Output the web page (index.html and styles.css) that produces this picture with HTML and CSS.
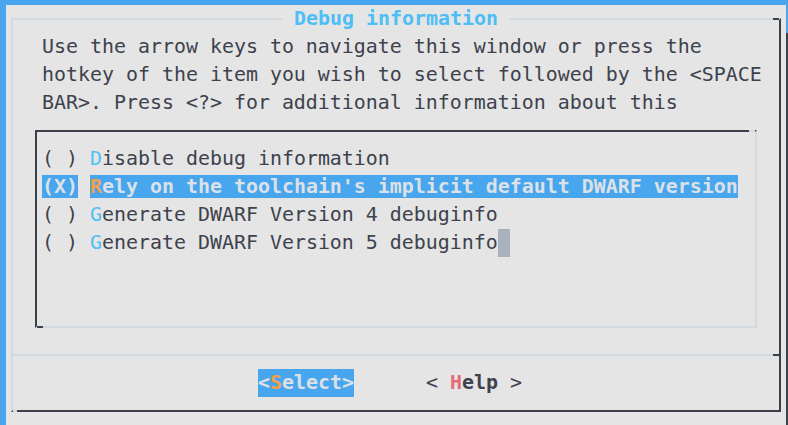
FILE: index.html
```html
<!DOCTYPE html>
<html>
<head>
<meta charset="utf-8">
<link rel="stylesheet" href="styles.css">
</head>
<body>
<div class="screen">
  <div class="dialog">
    <div class="frame">
      <div class="title-row"><span class="title"> Debug information </span></div>
      <div class="prompt">
        <div class="line">Use the arrow keys to navigate this window or press the</div>
        <div class="line">hotkey of the item you wish to select followed by the &lt;SPACE</div>
        <div class="line">BAR&gt;. Press &lt;?&gt; for additional information about this</div>
      </div>
      <div class="listbox">
        <div class="item"><span class="mark">( )</span> <span class="label"><span class="hk">D</span>isable debug information</span></div>
        <div class="item sel"><span class="mark">(X)</span> <span class="label"><span class="hk">R</span>ely on the toolchain's implicit default DWARF version</span></div>
        <div class="item"><span class="mark">( )</span> <span class="label"><span class="hk">G</span>enerate DWARF Version 4 debuginfo</span></div>
        <div class="item"><span class="mark">( )</span> <span class="label"><span class="hk">G</span>enerate DWARF Version 5 debuginfo</span><span class="cursor"></span></div>
      </div>
      <div class="sep"></div>
      <div class="buttons">
        <span class="btn active">&lt;<span class="hk">S</span>elect&gt;</span>
        <span class="btn"><span class="ang">&lt; </span><span class="hk">H</span>elp<span class="ang"> &gt;</span></span>
      </div>
    </div>
  </div>
</div>
</body>
</html>
```
FILE: styles.css
```css
html, body {
  margin: 0;
  padding: 0;
}
body {
  background: #48a5ee;
  font-family: "DejaVu Sans Mono", "Liberation Mono", monospace;
  font-size: 19.93px;
  line-height: 28px;
  color: #3d424d;
  overflow: hidden;
  width: 788px;
  height: 425px;
}
.screen {
  padding: 5px 0 0 6px;
}
.dialog {
  width: 780px;
  height: 420px;
  box-sizing: border-box;
  padding: 13px 5px;
  background: #e5e5e5;
  box-shadow: 24px 28px 0 #3b404a;
}
.frame {
  position: relative;
  height: 394px;
  box-sizing: border-box;
  border: 2px solid;
  border-color: #d3d9e0 #3b404a #3b404a #d3d9e0;
  display: flex;
  flex-direction: column;
}
.frame::after {
  content: "";
  position: absolute;
  top: -2px;
  right: 0;
  width: 6px;
  height: 2px;
  background: #3b404a;
}
.frame::before {
  content: "";
  position: absolute;
  bottom: -2px;
  left: 0;
  width: 4px;
  height: 2px;
  background: #d3d9e0;
}
.title-row {
  height: 28px;
  margin-top: -15px;
  text-align: center;
  flex: none;
}
.title {
  display: inline-block;
  white-space: pre;
  background: #e5e5e5;
  color: #4dbef6;
  font-weight: bold;
}
.prompt {
  padding-left: 29px;
  flex: none;
}
.line {
  height: 28px;
  white-space: pre;
}
.listbox {
  position: relative;
  flex: none;
  margin: 13px 0 13px 22px;
  width: 722px;
  height: 198px;
  box-sizing: border-box;
  border: 2px solid;
  border-color: #3b404a #d3d9e0 #d3d9e0 #3b404a;
  padding: 13px 0 0 5px;
}
.listbox::after {
  content: "";
  position: absolute;
  top: -2px;
  right: 0;
  width: 6px;
  height: 2px;
  background: #d3d9e0;
}
.listbox::before {
  content: "";
  position: absolute;
  bottom: -2px;
  left: 0;
  width: 6px;
  height: 2px;
  background: #3b404a;
}
.item {
  height: 28px;
  white-space: pre;
}
.hk {
  color: #4fc0f5;
}
.sel .mark,
.sel .label {
  background: #48a6ee;
  color: #dde1e7;
  font-weight: bold;
}
.sel .hk {
  color: #f2a04c;
}
.cursor {
  display: inline-block;
  width: 12px;
  height: 28px;
  background: #a9b1bd;
  vertical-align: top;
}
.sep {
  position: relative;
  flex: none;
  height: 28px;
}
.sep::before {
  content: "";
  position: absolute;
  left: 0;
  right: 0;
  top: 13px;
  height: 2px;
  background: #d3d9e0;
}
.sep::after {
  content: "";
  position: absolute;
  right: 0;
  top: 13px;
  width: 6px;
  height: 2px;
  background: #3b404a;
}
.buttons {
  flex: none;
  display: flex;
  gap: 72px;
  padding-left: 245px;
  height: 28px;
  font-weight: bold;
}
.btn {
  white-space: pre;
}
.btn.active {
  background: #48a6ee;
  color: #dde1e7;
}
.btn.active .hk {
  color: #f2a04c;
}
.btn .hk {
  color: #e56a77;
}
.btn .ang {
  font-weight: normal;
}
```
